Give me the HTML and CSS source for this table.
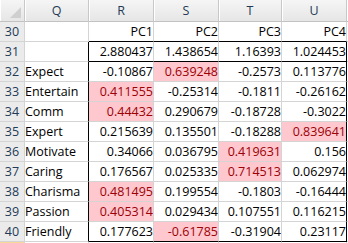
FILE: index.html
```html
<!DOCTYPE html>
<html>
<head>
<meta charset="utf-8">
<link rel="stylesheet" href="styles.css">
</head>
<body>
<table class="sheet">
  <colgroup>
    <col class="c-hd"><col class="c-q"><col class="c-r"><col class="c-s"><col class="c-t"><col class="c-u"><col class="c-v">
  </colgroup>
  <thead>
    <tr class="colhead">
      <th class="corner"><span class="tri"></span></th>
      <th>Q</th><th>R</th><th>S</th><th>T</th><th>U</th><th></th>
    </tr>
  </thead>
  <tbody>
    <tr>
      <th class="rowhead">30</th><td></td>
      <td class="num edge-b">PC1</td><td class="num edge-b">PC2</td><td class="num edge-b">PC3</td><td class="num edge-b">PC4</td><td></td>
    </tr>
    <tr>
      <th class="rowhead">31</th><td class="edge-r"></td>
      <td class="num edge-b">2.880437</td><td class="num edge-b">1.438654</td><td class="num edge-b">1.16393</td><td class="num edge-b edge-r">1.024453</td><td></td>
    </tr>
    <tr>
      <th class="rowhead">32</th><td class="lbl edge-r">Expect</td>
      <td class="num">-0.10867</td><td class="num hi">0.639248</td><td class="num">-0.2573</td><td class="num edge-r">0.113776</td><td></td>
    </tr>
    <tr>
      <th class="rowhead">33</th><td class="lbl edge-r">Entertain</td>
      <td class="num hi">0.411555</td><td class="num">-0.25314</td><td class="num">-0.1811</td><td class="num edge-r">-0.26162</td><td></td>
    </tr>
    <tr>
      <th class="rowhead">34</th><td class="lbl edge-r">Comm</td>
      <td class="num hi">0.44432</td><td class="num">0.290679</td><td class="num">-0.18728</td><td class="num edge-r">-0.3022</td><td></td>
    </tr>
    <tr>
      <th class="rowhead">35</th><td class="lbl edge-r">Expert</td>
      <td class="num">0.215639</td><td class="num">0.135501</td><td class="num">-0.18288</td><td class="num hi edge-r">0.839641</td><td></td>
    </tr>
    <tr>
      <th class="rowhead">36</th><td class="lbl edge-r">Motivate</td>
      <td class="num">0.34066</td><td class="num">0.036795</td><td class="num hi">0.419631</td><td class="num edge-r">0.156</td><td></td>
    </tr>
    <tr>
      <th class="rowhead">37</th><td class="lbl edge-r">Caring</td>
      <td class="num">0.176567</td><td class="num">0.025335</td><td class="num hi">0.714513</td><td class="num edge-r">0.062974</td><td></td>
    </tr>
    <tr>
      <th class="rowhead">38</th><td class="lbl edge-r">Charisma</td>
      <td class="num hi">0.481495</td><td class="num">0.199554</td><td class="num">-0.1803</td><td class="num edge-r">-0.16444</td><td></td>
    </tr>
    <tr>
      <th class="rowhead">39</th><td class="lbl edge-r">Passion</td>
      <td class="num hi">0.405314</td><td class="num">0.029434</td><td class="num">0.107551</td><td class="num edge-r">0.116215</td><td></td>
    </tr>
    <tr>
      <th class="rowhead">40</th><td class="lbl edge-r">Friendly</td>
      <td class="num edge-b">0.177623</td><td class="num hi edge-b">-0.61785</td><td class="num edge-b">-0.31904</td><td class="num edge-b edge-r">0.23117</td><td></td>
    </tr>
    <tr>
      <th class="rowhead sel"></th><td></td><td></td><td></td><td></td><td></td><td></td>
    </tr>
  </tbody>
</table>
</body>
</html>
```

FILE: styles.css
```css
html, body {
  margin: 0;
  padding: 0;
  background: #ffffff;
  overflow: hidden;
}

body {
  font-family: "Open Sans", "Liberation Sans", sans-serif;
  font-size: 12.5px;
  color: #000000;
}

.sheet {
  border-collapse: separate;
  border-spacing: 0;
  table-layout: fixed;
  width: 387px;
}

.c-hd { width: 25px; }
.c-q { width: 64px; }
.c-r { width: 65px; }
.c-s { width: 65px; }
.c-t { width: 63px; }
.c-u { width: 65px; }
.c-v { width: 40px; }

.sheet th,
.sheet td {
  box-sizing: border-box;
  padding: 0;
  height: 20px;
  line-height: 16px;
  white-space: nowrap;
  overflow: hidden;
  border-right: 1px solid #d4d4d4;
  border-bottom: 1px solid #d4d4d4;
}

.sheet td {
  vertical-align: bottom;
  padding-bottom: 1px;
}

.colhead th {
  height: 22px;
  font-weight: normal;
  color: #233a56;
  text-align: center;
  vertical-align: middle;
  background: linear-gradient(#f5f5f5, #e6e6e6);
  border-right: 1px solid #c8c8c8;
  border-bottom: 1px solid #c2c2c2;
  box-shadow: inset 1px 0 0 #ffffff;
}

.corner {
  position: relative;
}

.tri {
  position: absolute;
  right: 3px;
  bottom: 3px;
  width: 0;
  height: 0;
  border-left: 11px solid transparent;
  border-bottom: 11px solid #cfcfcf;
}

.rowhead {
  font-weight: normal;
  color: #233a56;
  text-align: center;
  vertical-align: middle;
  background: #ebebeb;
  border-right: 1px solid #c8c8c8;
  border-bottom: 1px solid #d0d0d0;
}

.rowhead.sel {
  background: linear-gradient(#f9d99a, #f2c46a);
}

.lbl {
  text-align: left;
  padding-left: 3px;
}

.num {
  text-align: right;
  padding-right: 3px;
}

.hi {
  background: #ffc7ce;
  color: #9c0006;
  border-right-color: #ffc7ce;
  border-bottom-color: #ffc7ce;
}

.sheet .edge-r {
  border-right: 1px solid #000000;
}

.sheet .edge-b {
  border-bottom: 1px solid #000000;
}
```
